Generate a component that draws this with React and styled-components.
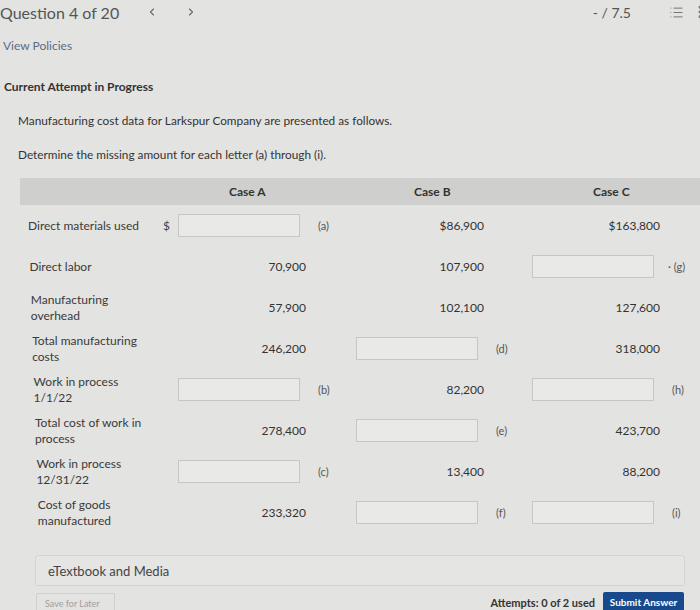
import React from "react";
import styled, { createGlobalStyle } from "styled-components";
import { ChevronLeft, ChevronRight, List, MoreVertical } from "lucide-react";

const GlobalStyle = createGlobalStyle`
  html, body {
    margin: 0;
    padding: 0;
    background: #e3e3e1;
  }
  body {
    font-family: Lato, "Open Sans", sans-serif;
    color: #3a3a3a;
    width: 700px;
    height: 610px;
    overflow: hidden;
  }
`;

const Page = styled.div`
  width: 700px;
  height: 610px;
  overflow: hidden;
`;

const TopBar = styled.div`
  display: flex;
  align-items: center;
  height: 24px;
`;

const QuestionTitle = styled.div`
  font-size: 16px;
  color: #555;
  margin-right: 27px;
`;

const NavArrow = styled.span`
  display: flex;
  color: #666;
  margin-right: ${(p) => p.$gap || 0}px;
`;

const Spacer = styled.div`
  flex: 1;
`;

const Score = styled.div`
  font-size: 14px;
  color: #555;
  margin-right: 38px;
`;

const IconWrap = styled.span`
  display: flex;
  color: #777;
  margin-right: ${(p) => p.$gap}px;
`;

const PolicyLink = styled.div`
  font-size: 12px;
  color: #5d6b84;
  margin: 14px 0 0 3px;
  line-height: 16px;
`;

const AttemptTitle = styled.div`
  font-size: 12px;
  font-weight: 700;
  color: #333;
  margin: 25px 0 0 4px;
  line-height: 16px;
`;

const Paragraph = styled.div`
  font-size: 11.8px;
  color: #333;
  margin: 18px 0 0 18px;
  line-height: 16px;
`;

const Table = styled.div`
  margin: 15px 0 0 20px;
`;

const columns = "140px 18px 128px 50px 128px 48px 128px 1fr";

const HeaderRow = styled.div`
  display: grid;
  grid-template-columns: ${columns};
  height: 27px;
  align-items: center;
  background: #cfcfcd;
`;

const HeaderCell = styled.div`
  grid-column: ${(p) => p.$col} / span 2;
  padding-left: ${(p) => p.$pad}px;
  font-size: 12px;
  font-weight: 700;
  color: #333;
`;

const Row = styled.div`
  display: grid;
  grid-template-columns: ${columns};
  height: 41px;
  align-items: center;
`;

const Label = styled.div`
  grid-column: 1;
  font-size: 12px;
  line-height: 16px;
  color: #3a3a3a;
  padding-left: ${(p) => p.$indent}px;
`;

const Dollar = styled.div`
  grid-column: 2;
  font-size: 12px;
  color: #444;
  padding-left: 3px;
`;

const Value = styled.div`
  grid-column: ${(p) => p.$col};
  text-align: right;
  font-size: 12px;
  color: #333;
`;

const Input = styled.div`
  grid-column: ${(p) => p.$col};
  width: 122px;
  height: 23px;
  box-sizing: border-box;
  border: 1px solid #c6c6c4;
  background: #e9e9e7;
`;

const Letter = styled.div`
  grid-column: ${(p) => p.$col};
  padding-left: ${(p) => (p.$tight ? 8 : 12)}px;
  font-size: 11px;
  color: #555;
`;

const MediaBar = styled.div`
  margin: 22px 15px 0 35px;
  height: 31px;
  box-sizing: border-box;
  border: 1px solid #d3d3d1;
  border-radius: 3px;
  background: #e5e5e3;
  display: flex;
  align-items: center;
  padding-left: 12px;
  font-size: 13px;
  color: #444;
`;

const Footer = styled.div`
  display: flex;
  align-items: flex-start;
  margin: 6px 0 0 36px;
  height: 24px;
`;

const SaveButton = styled.div`
  width: 79px;
  height: 22px;
  box-sizing: border-box;
  border: 1px solid #cfcfcd;
  border-bottom: none;
  border-radius: 2px 2px 0 0;
  padding: 4px 0 0 8px;
  font-size: 9px;
  line-height: 11px;
  color: #a0a0a0;
  margin-top: 1px;
`;

const Attempts = styled.div`
  font-size: 11px;
  font-weight: 700;
  color: #333;
  margin: 4px 8px 0 0;
`;

const SubmitButton = styled.div`
  background: #17498c;
  color: #fff;
  font-size: 10px;
  font-weight: 700;
  height: 20px;
  width: 81px;
  display: flex;
  align-items: center;
  justify-content: center;
  border-radius: 2px;
  margin-right: 16px;
`;

const rows = [
  {
    label: ["Direct materials used"],
    dollar: true,
    a: { input: true, letter: "(a)" },
    b: { value: "$86,900" },
    c: { value: "$163,800" },
  },
  {
    label: ["Direct labor"],
    a: { value: "70,900" },
    b: { value: "107,900" },
    c: { input: true, letter: "· (g)", tight: true },
  },
  {
    label: ["Manufacturing", "overhead"],
    a: { value: "57,900" },
    b: { value: "102,100" },
    c: { value: "127,600" },
  },
  {
    label: ["Total manufacturing", "costs"],
    a: { value: "246,200" },
    b: { input: true, letter: "(d)" },
    c: { value: "318,000" },
  },
  {
    label: ["Work in process", "1/1/22"],
    a: { input: true, letter: "(b)" },
    b: { value: "82,200" },
    c: { input: true, letter: "(h)" },
  },
  {
    label: ["Total cost of work in", "process"],
    a: { value: "278,400" },
    b: { input: true, letter: "(e)" },
    c: { value: "423,700" },
  },
  {
    label: ["Work in process", "12/31/22"],
    a: { input: true, letter: "(c)" },
    b: { value: "13,400" },
    c: { value: "88,200" },
  },
  {
    label: ["Cost of goods", "manufactured"],
    a: { value: "233,320" },
    b: { input: true, letter: "(f)" },
    c: { input: true, letter: "(i)" },
  },
];

const renderCell = (cell, col, key) => {
  if (cell.input) {
    return [
      <Input key={`${key}-in`} $col={col} />,
      <Letter key={`${key}-l`} $col={col + 1} $tight={cell.tight}>
        {cell.letter}
      </Letter>,
    ];
  }
  return (
    <Value key={`${key}-v`} $col={col}>
      {cell.value}
    </Value>
  );
};

export default function App() {
  return (
    <Page>
      <GlobalStyle />
      <TopBar>
        <QuestionTitle>Question 4 of 20</QuestionTitle>
        <NavArrow $gap={27}>
          <ChevronLeft size={12} strokeWidth={2.2} />
        </NavArrow>
        <NavArrow>
          <ChevronRight size={12} strokeWidth={2.2} />
        </NavArrow>
        <Spacer />
        <Score>- / 7.5</Score>
        <IconWrap $gap={8}>
          <List size={15} strokeWidth={1.6} />
        </IconWrap>
        <IconWrap $gap={-8}>
          <MoreVertical size={16} strokeWidth={2.4} />
        </IconWrap>
      </TopBar>

      <PolicyLink>View Policies</PolicyLink>
      <AttemptTitle>Current Attempt in Progress</AttemptTitle>
      <Paragraph>
        Manufacturing cost data for Larkspur Company are presented as follows.
      </Paragraph>
      <Paragraph>
        Determine the missing amount for each letter (a) through (i).
      </Paragraph>

      <Table>
        <HeaderRow>
          <HeaderCell $col={3} $pad={51}>Case A</HeaderCell>
          <HeaderCell $col={5} $pad={58}>Case B</HeaderCell>
          <HeaderCell $col={7} $pad={61}>Case C</HeaderCell>
        </HeaderRow>
        {rows.map((r, i) => (
          <Row key={i}>
            <Label $indent={8 + i * 1.4}>
              {r.label.map((line, j) => (
                <div key={j}>{line}</div>
              ))}
            </Label>
            {r.dollar && <Dollar>$</Dollar>}
            {renderCell(r.a, 3, `a${i}`)}
            {renderCell(r.b, 5, `b${i}`)}
            {renderCell(r.c, 7, `c${i}`)}
          </Row>
        ))}
      </Table>

      <MediaBar>eTextbook and Media</MediaBar>
      <Footer>
        <SaveButton>Save for Later</SaveButton>
        <Spacer />
        <Attempts>Attempts: 0 of 2 used</Attempts>
        <SubmitButton>Submit Answer</SubmitButton>
      </Footer>
    </Page>
  );
}
